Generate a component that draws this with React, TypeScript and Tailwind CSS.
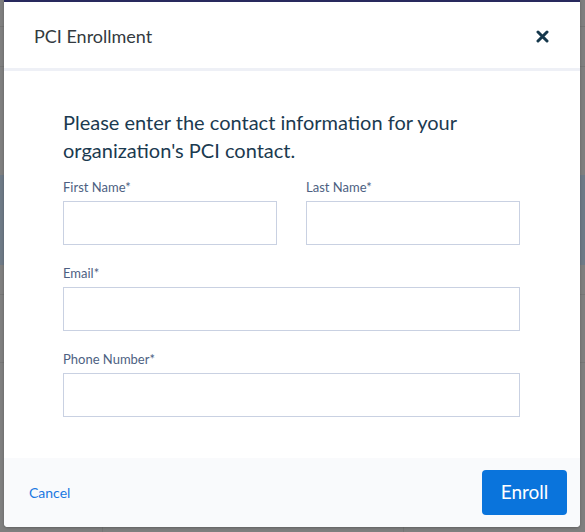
const Field = ({ label, className = '' }: { label: string; className?: string }) => (
    <div className={`flex flex-col ${className}`}>
        <label className="text-[13px] leading-[20px] text-[#4d5f82] mb-[4px]">{label}</label>
        <input className="h-[44px] w-full border border-[#c9d1e2] bg-white outline-none px-2 text-[15px]" />
    </div>
);

const App = () => {
    return (
        <div
            className="relative w-[585px] h-[532px] overflow-hidden bg-[#7f7f7f]"
            style={{ fontFamily: 'Lato, "Open Sans", "Liberation Sans", sans-serif' }}
        >
            {/* page behind the dimmed overlay */}
            <div className="flex flex-col w-full h-full">
                <div className="h-[27px] border-b border-[#747474]" />
                <div className="h-[40px] border-b border-[#757575]" />
                <div className="h-[108px]" />
                <div className="h-[90px] bg-[#6e7a87]" />
                <div className="h-[30px] border-b border-[#767676]" />
                <div className="h-[68px] border-b border-[#767676]" />
                <div className="flex-1 flex">
                    <div className="w-[103px] border-r border-[#767676]" />
                    <div className="flex-1" />
                    <div className="w-[182px] border-l border-[#767676]" />
                </div>
            </div>

            {/* modal */}
            <div className="absolute left-[4px] top-0 w-[576px] h-[527px] bg-white rounded-b-[4px] border-t-2 border-[#28295d] flex flex-col overflow-hidden shadow-[0_1px_3px_rgba(0,0,0,0.25)]">
                <div className="h-[69px] shrink-0 flex items-center justify-between pl-[30px] pr-[31px] border-b-[3px] border-[#eef0f6]">
                    <h2 className="text-[18px] text-[#333a40] pt-[2px]">PCI Enrollment</h2>
                    <button className="text-[#16384c] pt-[2px]">
                        <svg width="13" height="13" viewBox="0 0 13 13">
                            <path d="M2 2 L11 11 M11 2 L2 11" stroke="currentColor" strokeWidth="3" strokeLinecap="round" />
                        </svg>
                    </button>
                </div>

                <div className="flex-1 pl-[59px] pr-[60px] pt-[37px]">
                    <p className="text-[20px] leading-[28px] text-[#1b3a50] mb-[13px]">
                        Please enter the contact information for your organization's PCI contact.
                    </p>
                    <div className="flex gap-[29px] mb-[18px]">
                        <Field label="First Name*" className="w-[214px]" />
                        <Field label="Last Name*" className="w-[214px]" />
                    </div>
                    <Field label="Email*" className="mb-[18px]" />
                    <Field label="Phone Number*" />
                </div>

                <div className="h-[69px] shrink-0 bg-[#f9fafc] flex items-center justify-between pl-[25px] pr-[13px]">
                    <button className="text-[14px] text-[#1a78e2]">Cancel</button>
                    <button className="w-[85px] h-[45px] rounded-[4px] bg-[#0a74dc] text-white text-[19px]">
                        Enroll
                    </button>
                </div>
            </div>
        </div>
    );
};

export default App;
